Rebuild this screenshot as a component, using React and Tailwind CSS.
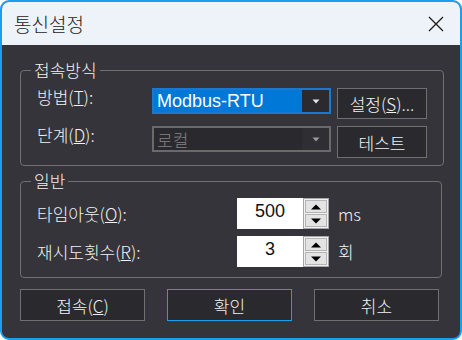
function Arrow({ color }) {
  return (
    <svg width="8" height="5" viewBox="0 0 8 5">
      <path d="M0.5 0.5H7.5L4 4.5Z" fill={color} />
    </svg>
  );
}

function SpinButton({ up }) {
  return (
    <div className="flex flex-1 items-center justify-center border border-[#b4b4b4] bg-[#e3e3e3]">
      <svg width="10" height="6" viewBox="0 0 10 6">
        <path d={up ? "M0 5.5H10L5 0.5Z" : "M0 0.5H10L5 5.5Z"} fill="#000" />
      </svg>
    </div>
  );
}

function SpinBox({ value }) {
  return (
    <div className="flex h-[31px]">
      <div className="flex w-[66px] items-start justify-center bg-white pt-[3px] font-['Liberation_Sans',sans-serif] text-[18px] leading-[20px] text-[#111]">
        {value}
      </div>
      <div className="flex w-[26px] flex-col gap-[1px] border border-[#a6a6a6] bg-[#f0f0f0] p-[1px]">
        <SpinButton up />
        <SpinButton />
      </div>
    </div>
  );
}

function Button({ children, className = "" }) {
  return (
    <div className={`flex items-center justify-center border bg-[#2a2a2e] text-[17px] leading-none ${className}`}>
      {children}
    </div>
  );
}

export default function App() {
  return (
    <div className="flex h-[340px] w-[462px] flex-col overflow-hidden rounded-[9px] border-2 border-[#1a9ff0] bg-[#35343a] font-['Noto_Sans_CJK_KR',sans-serif] font-light text-[#f2f2f2]">
      <div className="flex h-[43px] shrink-0 items-center justify-between bg-[#eef2f9] pl-[12px] pr-[16px]">
        <span className="text-[19px] leading-none text-[#1b1b1b]">통신설정</span>
        <svg width="16" height="16" viewBox="0 0 16 16">
          <path d="M1 1L15 15M15 1L1 15" stroke="#1b1b1b" strokeWidth="1.3" />
        </svg>
      </div>

      <div className="px-[18px] pt-[16px]">
        <fieldset className="rounded-[4px] border border-[#707070] px-[16px] pb-[7px]">
          <legend className="-ml-[6px] px-[3px] text-[17px] leading-[18px]">접속방식</legend>
          <div className="mt-[9px] flex flex-col gap-[7px]">
            <div className="flex items-start">
              <div className="w-[115px] text-[17px] leading-[18px]">
                방법(<u>T</u>):
              </div>
              <div className="flex h-[26px] w-[179px] border-2 border-[#1a78d0]">
                <div className="flex flex-1 items-center bg-[#0078d7] pl-[3px] font-['Liberation_Sans',sans-serif] text-[18px] font-normal leading-none text-white">
                  Modbus-RTU
                </div>
                <div className="flex w-[27px] items-center justify-center bg-[#2b2b2f]">
                  <Arrow color="#e6e6e6" />
                </div>
              </div>
              <Button className="ml-[6px] h-[31px] w-[90px] border-[#707070]">
                설정(<u>S</u>)...
              </Button>
            </div>
            <div className="flex items-start">
              <div className="w-[115px] text-[17px] leading-[18px]">
                단계(<u>D</u>):
              </div>
              <div className="flex h-[26px] w-[179px] border-2 border-[#6a6a6a] bg-[#2a2a2e]">
                <div className="flex flex-1 items-center pl-[3px] text-[17px] leading-none text-[#828282]">로컬</div>
                <div className="flex w-[27px] items-center justify-center bg-[#2f2f33]">
                  <Arrow color="#9a9a9a" />
                </div>
              </div>
              <Button className="ml-[6px] h-[32px] w-[90px] border-[#707070]">테스트</Button>
            </div>
          </div>
        </fieldset>

        <fieldset className="mt-[6px] rounded-[4px] border border-[#707070] px-[16px] pb-[10px]">
          <legend className="-ml-[6px] px-[3px] text-[17px] leading-[18px]">일반</legend>
          <div className="mt-[8px] flex flex-col gap-[7px]">
            <div className="flex items-center">
              <div className="w-[200px] text-[17px] leading-[18px]">
                타임아웃(<u>O</u>):
              </div>
              <SpinBox value="500" />
              <span className="ml-[9px] text-[17px] leading-none">ms</span>
            </div>
            <div className="flex items-center">
              <div className="w-[200px] text-[17px] leading-[18px]">
                재시도횟수(<u>R</u>):
              </div>
              <SpinBox value="3" />
              <span className="ml-[9px] text-[17px] leading-none">회</span>
            </div>
          </div>
        </fieldset>

        <div className="mt-[11px] flex gap-[22px]">
          <Button className="h-[32px] w-[125px] border-[#707070]">
            접속(<u>C</u>)
          </Button>
          <Button className="h-[32px] w-[125px] border-[#1a9ff0]">확인</Button>
          <Button className="h-[32px] w-[125px] border-[#707070]">취소</Button>
        </div>
      </div>
    </div>
  );
}
